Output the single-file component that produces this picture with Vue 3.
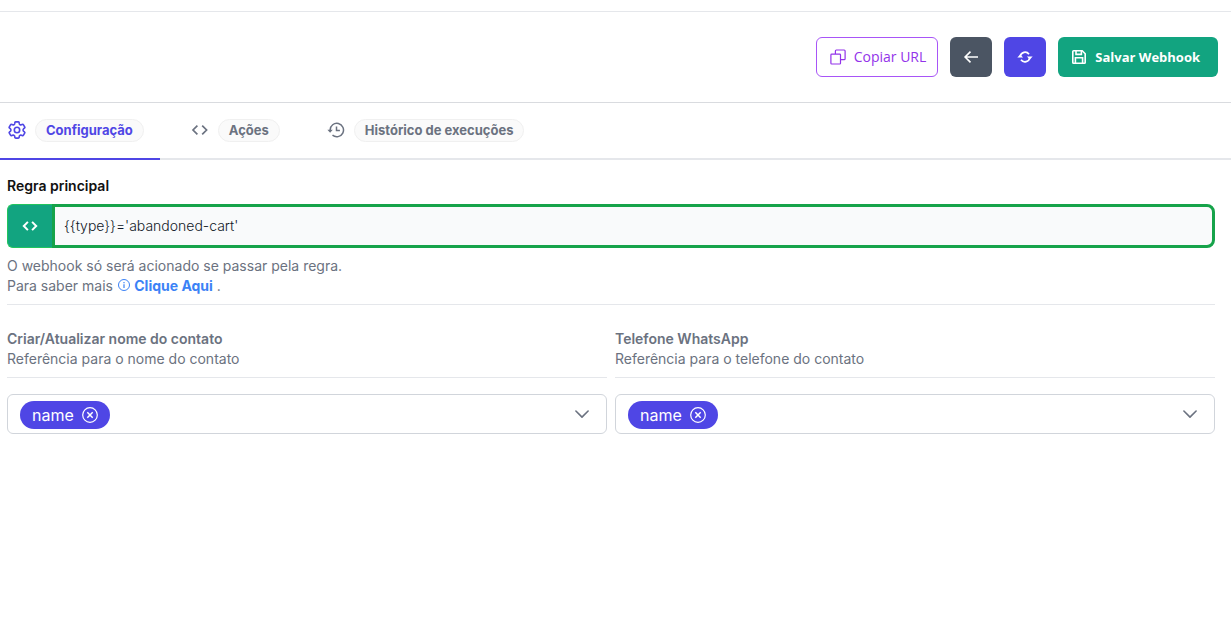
<template>
  <div class="page">
    <header class="toolbar">
      <button type="button" class="btn btn-outline">
        <svg viewBox="0 0 16 16" width="16" height="16" fill="none" stroke="currentColor" stroke-width="1.2">
          <rect x="0.9" y="5.2" width="9.6" height="9.8" rx="0.8" />
          <path d="M5.4 5V1.9a.9.9 0 0 1 .9-.9h7.9a.9.9 0 0 1 .9.9v7.9a.9.9 0 0 1-.9.9h-3.5" />
        </svg>
        Copiar URL
      </button>
      <button type="button" class="btn btn-icon btn-back" aria-label="Voltar">
        <svg viewBox="0 0 16 16" width="16" height="16" fill="none" stroke="currentColor" stroke-width="1.6">
          <path d="M15 8H2M7.5 2.6 2.1 8l5.4 5.4" />
        </svg>
      </button>
      <button type="button" class="btn btn-icon btn-refresh" aria-label="Atualizar">
        <svg viewBox="0 0 16 16" width="16" height="16" fill="none" stroke="currentColor" stroke-width="1.7">
          <path d="M3.2 7.4A4.9 4.9 0 0 1 12 5.2M12.8 8.6A4.9 4.9 0 0 1 4 10.8" />
          <path d="M.3 8.6h5.800L3.200 5.600zM9.900 7.400h5.800L12.800 10.400z" fill="currentColor" stroke="none" />
        </svg>
      </button>
      <button type="button" class="btn btn-save">
        <svg viewBox="0 0 16 16" width="16" height="16" fill="none" stroke="currentColor" stroke-width="1.6">
          <path d="M2.6 1.8h8.6l3 3v8.6a.8.8 0 0 1-.8.8H2.6a.8.8 0 0 1-.8-.8V2.6a.8.8 0 0 1 .8-.8z" />
          <path d="M4.4 14V8.8h7.2V14M5 2v3.4h5.4V2" />
        </svg>
        Salvar Webhook
      </button>
    </header>

    <nav class="tabs" role="tablist">
      <button
        v-for="tab in tabs"
        :key="tab.id"
        type="button"
        role="tab"
        class="tab"
        :class="{ active: activeTab === tab.id }"
        :aria-selected="activeTab === tab.id"
        @click="activeTab = tab.id"
      >
        <svg v-if="tab.id === 'config'" viewBox="2 2 20 20" width="18" height="18" fill="none" stroke="currentColor" stroke-width="1.8" stroke-linejoin="round">
          <path d="M9.6 3.9c.1-.5.6-.9 1.1-.9h2.6c.5 0 1 .4 1.1.9l.2 1.3c.1.4.3.7.6.9l.3.1c.3.2.7.2 1.1.1l1.2-.5c.5-.2 1.1 0 1.4.5l1.3 2.2c.3.5.2 1.1-.3 1.4l-1 .9c-.3.2-.4.6-.4 1v.4c0 .4.1.7.4 1l1 .8c.5.4.6 1 .3 1.5l-1.3 2.2c-.3.5-.9.7-1.4.5l-1.2-.5c-.4-.1-.8-.1-1.1.1l-.3.2c-.3.1-.5.5-.6.8l-.2 1.3c-.1.6-.6.9-1.1.9h-2.6c-.5 0-1-.3-1.1-.9l-.2-1.3c-.1-.3-.3-.7-.6-.8l-.3-.2c-.3-.2-.7-.2-1.1-.1l-1.2.5c-.5.2-1.1 0-1.4-.5l-1.3-2.2c-.3-.5-.2-1.1.3-1.5l1-.8c.3-.3.4-.6.4-1v-.4c0-.4-.1-.8-.4-1l-1-.9c-.5-.3-.6-.9-.3-1.4l1.3-2.2c.3-.5.9-.7 1.4-.5l1.2.5c.4.1.8.1 1.1-.1l.3-.1c.3-.2.5-.5.6-.9z" />
          <circle cx="12" cy="12" r="3" />
        </svg>
        <svg v-else-if="tab.id === 'actions'" viewBox="0 0 18 18" width="18" height="18" fill="none" stroke="currentColor" stroke-width="1.7">
          <path d="M6.4 4.6 2 9l4.4 4.4M11.2 4.6 15.6 9l-4.4 4.4" />
        </svg>
        <svg v-else viewBox="0 0 18 18" width="18" height="18" fill="none" stroke="currentColor" stroke-width="1.5">
          <path d="M3.1 10V9a6.700 6.700 0 1 1 2.400 5.200" />
          <path d="M.4 8.8h5.4l-2.7 3z" fill="currentColor" stroke="none" />
          <path d="M9.5 5.4V9.5h3.4" />
        </svg>
        <span class="tab-label">{{ tab.label }}</span>
      </button>
    </nav>

    <main class="content">
      <label class="rule-label" for="rule">Regra principal</label>
      <div class="rule">
        <span class="rule-icon">
          <svg viewBox="0 0 18 18" width="18" height="18" fill="none" stroke="currentColor" stroke-width="2">
            <path d="M6.9 4.9 2.8 9l4.1 4.1M11.1 4.9 15.2 9l-4.1 4.1" />
          </svg>
        </span>
        <input id="rule" v-model="rule" type="text" />
      </div>
      <p class="hint">
        O webhook só será acionado se passar pela regra.<br />
        Para saber mais
        <a href="#">
          <svg viewBox="0 0 14 14" width="14" height="14" fill="none" stroke="currentColor">
            <circle cx="7" cy="7" r="5.5" />
            <path d="M7 6.2v3.8M7 4v1.2" stroke-width="1.2" />
          </svg>
          Clique Aqui</a>
        .
      </p>

      <div class="fields">
        <section v-for="field in fields" :key="field.id" class="field">
          <label class="field-head" :for="field.id">
            <strong>{{ field.title }}</strong>
            <span>{{ field.description }}</span>
          </label>
          <div class="picker">
            <span v-for="tag in field.tags" :key="tag" class="chip">
              {{ tag }}
              <button type="button" aria-label="Remover" @click="removeTag(field, tag)">
                <svg viewBox="0 0 16 16" width="16" height="16" fill="none" stroke="currentColor" stroke-width="1.2">
                  <circle cx="8" cy="8" r="7.3" />
                  <path d="m5.3 5.3 5.4 5.4M10.7 5.3l-5.4 5.4" stroke-width="1.5" />
                </svg>
              </button>
            </span>
            <select :id="field.id" @change="addTag(field, $event)">
              <option value=""></option>
              <option v-for="option in options" :key="option" :value="option">{{ option }}</option>
            </select>
            <svg class="chevron" viewBox="0 0 14 14" width="14" height="14" fill="none" stroke="currentColor" stroke-width="1.6" stroke-linecap="round" stroke-linejoin="round">
              <path d="m.9 4 6.1 6.1L13.1 4" />
            </svg>
          </div>
        </section>
      </div>
    </main>
  </div>
</template>

<script setup>
import { ref } from 'vue'

const activeTab = ref('config')
const tabs = [
  { id: 'config', label: 'Configuração' },
  { id: 'actions', label: 'Ações' },
  { id: 'history', label: 'Histórico de execuções' }
]

const rule = ref("{{type}}='abandoned-cart'")

const options = ['name', 'type']
const fields = ref([
  {
    id: 'contact-name',
    title: 'Criar/Atualizar nome do contato',
    description: 'Referência para o nome do contato',
    tags: ['name']
  },
  {
    id: 'contact-phone',
    title: 'Telefone WhatsApp',
    description: 'Referência para o telefone do contato',
    tags: ['name']
  }
])

function removeTag(field, tag) {
  field.tags = field.tags.filter((t) => t !== tag)
}

function addTag(field, event) {
  const value = event.target.value
  if (value && !field.tags.includes(value)) {
    field.tags.push(value)
  }
  event.target.value = ''
}
</script>

<style>
body {
  margin: 0;
  background: #fff;
}
</style>

<style scoped>
.page {
  padding-top: 11px;
  color: #6b7280;
  font-family: Inter, sans-serif;
  font-size: 14px;
  line-height: 20px;
}

.page * {
  box-sizing: border-box;
}

svg {
  flex: none;
}

button {
  font-family: inherit;
  cursor: pointer;
}

.toolbar {
  display: flex;
  justify-content: flex-end;
  gap: 12px;
  padding: 25px 13px;
  border-top: 1px solid #e5e7eb;
  border-bottom: 1px solid #d9dbdf;
}

.btn {
  display: flex;
  align-items: center;
  justify-content: center;
  gap: 8px;
  height: 40px;
  padding: 0 13px;
  border: 0;
  border-radius: 6px;
  color: #fff;
  font-family: 'Open Sans', 'Noto Sans', sans-serif;
  font-size: 14px;
  line-height: 20px;
}

.btn-outline {
  padding: 0 11px 0 13px;
  border: 1px solid #a855f7;
  background: #fff;
  color: #9333ea;
  font-weight: 500;
}

.btn-icon {
  width: 42px;
}

.btn-back {
  background: #4b5563;
}

.btn-refresh {
  background: #4f46e5;
}

.btn-save {
  padding: 0 18px 0 13px;
  background: #12a480;
  font-size: 13px;
  font-weight: 700;
}

.tabs {
  display: flex;
  gap: 15px;
  border-bottom: 2px solid #e5e7eb;
}

.tab {
  display: flex;
  align-items: center;
  gap: 9px;
  height: 57px;
  margin-bottom: -2px;
  padding: 0 16px 2px;
  border: 0;
  border-bottom: 2px solid transparent;
  background: none;
  color: #6b7280;
}

.tab:first-child {
  padding-left: 8px;
}

.tab.active {
  border-color: #4f46e5;
  color: #4f46e5;
}

.tab-label {
  margin-top: 1px;
  padding: 1px 10px;
  border: 1px solid #f0f0f0;
  border-radius: 12px;
  background: #fafafa;
  font-size: 13px;
  font-weight: 700;
  line-height: 19px;
}

.content {
  padding: 16px 16px 0 7px;
}

.rule-label {
  display: block;
  margin-bottom: 8px;
  color: #111;
  font-weight: 600;
}

.rule {
  display: flex;
  height: 44px;
}

.rule-icon {
  display: flex;
  align-items: center;
  justify-content: center;
  width: 45px;
  border: 1px solid #22c55e;
  border-right: 0;
  border-radius: 6px 0 0 6px;
  background: #12a480;
  color: #fff;
}

.rule input {
  flex: 1;
  min-width: 0;
  padding: 0 9px 2px;
  border: 3px solid #16a34a;
  border-radius: 0 8px 8px 0;
  outline: none;
  background: #f9fafb;
  color: #111827;
  font-family: inherit;
  font-size: 14px;
  font-weight: 300;
}

.hint {
  margin: 0;
  padding: 8px 0;
  border-bottom: 1px solid #e5e7eb;
}

.hint a {
  color: #3b82f6;
  font-weight: 700;
  text-decoration: none;
}

.hint svg {
  vertical-align: -1px;
}

.fields {
  display: grid;
  grid-template-columns: 1fr 1fr;
  gap: 8px;
  padding-top: 24px;
}

.field-head {
  display: block;
  margin-bottom: 16px;
  padding-bottom: 8px;
  border-bottom: 1px solid #e5e7eb;
}

.field-head strong,
.field-head span {
  display: block;
}

.field-head strong {
  font-weight: 600;
}

.picker {
  display: flex;
  align-items: center;
  gap: 8px;
  height: 40px;
  padding-left: 12px;
  border: 1px solid #d1d5db;
  border-radius: 6px;
}

.chip {
  display: flex;
  align-items: center;
  gap: 8px;
  height: 28px;
  margin-top: 2px;
  padding: 0 12px;
  border-radius: 14px;
  background: #4f46e5;
  color: #fff;
  font-size: 16px;
}

.chip button {
  display: flex;
  padding: 0;
  border: 0;
  background: none;
  color: inherit;
}

.picker select {
  flex: 1;
  min-width: 0;
  height: 100%;
  border: 0;
  outline: none;
  background: none;
  appearance: none;
  font: inherit;
}

.chevron {
  margin-right: 17px;
  pointer-events: none;
}
</style>
